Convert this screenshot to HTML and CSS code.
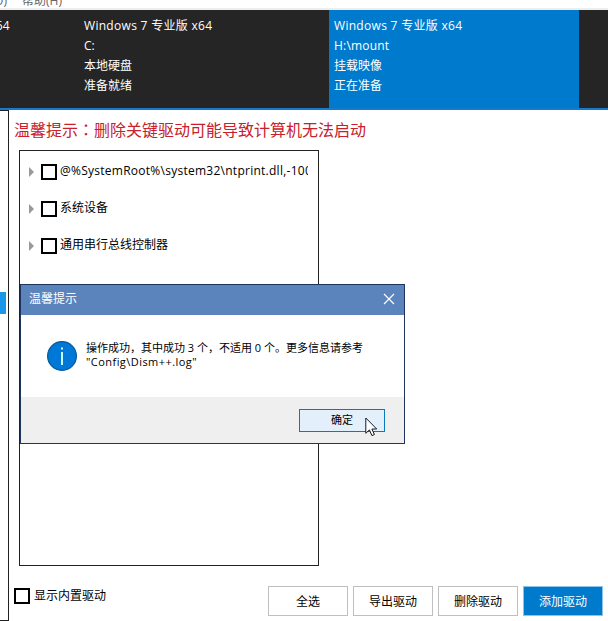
FILE: index.html
```html
<!DOCTYPE html>
<html lang="zh-CN">
<head>
<meta charset="utf-8">
<title>Dism++</title>
<link rel="stylesheet" href="styles.css">
</head>
<body>
<div class="app">
  <div class="menubar"><span class="menu-item first">(O)</span><span class="menu-item">帮助(H)</span></div>
  <header class="images">
    <div class="image clipped"><p class="os">Windows 7 专业版 x64</p></div>
    <div class="image"><p class="os">Windows 7 专业版 x64</p><p>C:</p><p>本地硬盘</p><p>准备就绪</p></div>
    <div class="image selected"><p class="os">Windows 7 专业版 x64</p><p class="path">H:\mount</p><p>挂载映像</p><p>正在准备</p></div>
  </header>
  <div class="body">
    <aside class="sidebar"><div class="nav-active"></div></aside>
    <main class="main">
      <h1 class="warning">温馨提示<span class="colon" lang="zh-TW">：</span>删除关键驱动可能导致计算机无法启动</h1>
      <div class="tree">
        <div class="row"><i class="arrow"></i><i class="check"></i><span class="name root">@%SystemRoot%\system32\ntprint.dll,-1001</span></div>
        <div class="row"><i class="arrow"></i><i class="check"></i><span class="name">系统设备</span></div>
        <div class="row"><i class="arrow"></i><i class="check"></i><span class="name">通用串行总线控制器</span></div>
      </div>
      <footer class="footer">
        <label class="builtin"><i class="check"></i><span>显示内置驱动</span></label>
        <div class="actions">
          <button class="btn">全选</button>
          <button class="btn">导出驱动</button>
          <button class="btn">删除驱动</button>
          <button class="btn primary">添加驱动</button>
        </div>
      </footer>
    </main>
  </div>
</div>
<section class="dialog">
  <div class="dialog-title"><span>温馨提示</span>
    <svg width="12" height="12" viewBox="0 0 12 12"><path d="M1 1l10 10M11 1L1 11" stroke="#fff" stroke-width="1.2"/></svg>
  </div>
  <div class="dialog-content">
    <svg class="info" width="30" height="30" viewBox="0 0 30 30"><circle cx="15" cy="15" r="14.4" fill="#0078d7" stroke="#075a9c" stroke-width="1.2"/><path d="M14 11h2v13h-2zM14 6.5h2v2h-2z" fill="#c4fbff"/></svg>
    <div class="message"><p class="line-one">操作成功，其中成功 3 个，不适用 0 个。更多信息请参考</p><p class="line-two">"Config\Dism++.log"</p></div>
  </div>
  <div class="dialog-footer"><button class="ok">确定</button></div>
</section>
<svg class="cursor" width="13" height="20" viewBox="0 0 13 20"><path d="M.8 1v15.3l3.6-3.4 2.5 5.7 2.5-1.1-2.5-5.5h4.8z" fill="#fff" stroke="#101828" stroke-width="1"/></svg>
</body>
</html>
```

FILE: styles.css
```css
* { box-sizing: border-box; }
body { margin: 0; width: 608px; height: 621px; overflow: hidden; background: #fff; color: #000; font: 12px/20px "Open Sans", "Noto Sans CJK SC", sans-serif; }
p, h1 { margin: 0; font-weight: 400; white-space: nowrap; }
.app { height: 621px; display: flex; flex-direction: column; }
.menubar { height: 10px; flex: none; display: flex; gap: 15px; align-items: flex-end; overflow: hidden; border-bottom: 2px solid #eee; color: #666; line-height: 15px; white-space: nowrap; }
.menu-item.first { width: 7px; display: flex; justify-content: flex-end; }
.images { height: 100px; flex: none; display: flex; background: #252525; border-bottom: 2px solid #1979ca; overflow: hidden; }
.image { width: 250px; flex: none; padding: 6px 5px 0; color: #fff; }
.image.clipped { width: 79px; display: flex; padding-right: 69px; justify-content: flex-end; }
.image.selected { background: #007acc; }
.os { letter-spacing: .3px; }
.path { letter-spacing: .2px; }
.body { flex: 1; display: flex; min-height: 0; }
.sidebar { width: 9px; flex: none; border: solid #222; border-width: 1px 1px 1px 0; padding-top: 181px; }
.nav-active { width: 6px; height: 22px; background: #1b97ea; }
.main { flex: 1; min-width: 0; display: flex; flex-direction: column; padding: 8px 5px 5px; }
.warning { height: 32px; flex: none; color: #c8202c; font-size: 16px; line-height: 22px; }
.colon { font-family: "Noto Sans CJK TC", sans-serif; }
.tree { width: 300px; height: 416px; flex: none; margin-left: 5px; padding: 2px 10px; border: 1px solid #222; }
.row { height: 37px; display: flex; align-items: center; }
.arrow { flex: none; width: 0; height: 0; margin-right: 7px; border: solid transparent; border-width: 5px 0 5px 5px; border-left-color: #999; }
.row .arrow { margin-left: -1px; }
.check { flex: none; width: 16px; height: 16px; border: 2px solid #000; }
.row .check { margin-right: 3px; }
.name { overflow: hidden; white-space: nowrap; line-height: 18px; margin-top: -2px; }
.root { letter-spacing: .26px; }
.footer { flex: 1; display: flex; justify-content: space-between; align-items: flex-end; }
.builtin { display: flex; gap: 4px; align-items: center; margin-bottom: 10px; }
.actions { display: flex; gap: 5px; }
.btn { width: 80px; height: 30px; padding: 2px 0 0; border: 1px solid #bfbfbf; background: #fff; color: #000; font: inherit; }
.btn.primary { background: #007acc; border-color: #8fc3e5; color: #fff; }
.dialog { position: absolute; left: 20px; top: 284px; width: 385px; height: 160px; display: flex; flex-direction: column; border: 1px solid #1d355f; background: #fff; }
.dialog-title { height: 30px; flex: none; display: flex; justify-content: space-between; align-items: center; padding: 0 9px 2px 8px; background: #5b84bd; color: #fff; }
.dialog-content { flex: 1; display: flex; gap: 9px; padding: 26px 0 0 26px; }
.message { font-size: 11px; line-height: 14px; }
.line-two { letter-spacing: .45px; }
.dialog-footer { height: 46px; flex: none; display: flex; justify-content: flex-end; align-items: center; padding-right: 19px; background: #efefef; }
.ok { width: 86px; height: 23px; padding: 0; border: 1px solid #087abd; background: #e3f0fb; color: #000; font: inherit; font-size: 11px; }
.cursor { position: absolute; left: 365px; top: 417px; }
```
